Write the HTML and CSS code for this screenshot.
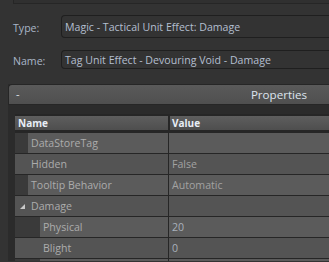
FILE: index.html
```html
<!DOCTYPE html>
<html>
<head>
<meta charset="utf-8">
<link rel="stylesheet" href="styles.css">
</head>
<body>
<div class="topbox"></div>
<div class="form">
  <div class="frow type">
    <div class="flabel">Type:</div>
    <div class="fbox">Magic - Tactical Unit Effect: Damage</div>
  </div>
  <div class="frow name">
    <div class="flabel">Name:</div>
    <div class="fbox">Tag Unit Effect - Devouring Void - Damage</div>
  </div>
</div>
<div class="panel">
  <div class="phead">
    <span class="dash">-</span>
    <span class="ptitle">Properties</span>
  </div>
  <div class="pbody">
    <div class="grid">
      <div class="ghead">
        <div class="gcname">Name</div>
        <div class="gcval">Value</div>
      </div>
      <div class="grow light">
        <div class="ncell"><span class="ind l1"></span><span class="ntext">DataStoreTag</span></div>
        <div class="vcell"></div>
      </div>
      <div class="grow dark">
        <div class="ncell"><span class="ind l1"></span><span class="ntext">Hidden</span></div>
        <div class="vcell">False</div>
      </div>
      <div class="grow light">
        <div class="ncell"><span class="ind l1"></span><span class="ntext">Tooltip Behavior</span></div>
        <div class="vcell">Automatic</div>
      </div>
      <div class="grow dark">
        <div class="ncell"><span class="ind l1 exp"><svg width="5" height="5" viewBox="0 0 5 5"><polygon points="5,0 5,5 0,5" fill="#c8c8c8"/></svg></span><span class="ntext">Damage</span></div>
        <div class="vcell"></div>
      </div>
      <div class="grow light">
        <div class="ncell"><span class="ind l2"></span><span class="ntext">Physical</span></div>
        <div class="vcell num">20</div>
      </div>
      <div class="grow dark">
        <div class="ncell"><span class="ind l2"></span><span class="ntext">Blight</span></div>
        <div class="vcell num">0</div>
      </div>
      <div class="grow light short">
        <div class="ncell"><span class="ind l2"></span><span class="ntext"></span></div>
        <div class="vcell"></div>
      </div>
    </div>
  </div>
</div>
</body>
</html>
```
FILE: styles.css
```css
html, body {
  margin: 0;
  padding: 0;
  background: #333333;
  width: 329px;
  height: 262px;
  overflow: hidden;
  font-family: "Open Sans", "Noto Sans", sans-serif;
  font-size: 10.6px;
}
.topbox {
  height: 3px;
  margin-left: 13px;
  border-left: 1px solid #262626;
  border-bottom: 1px solid #262626;
  background: #303030;
}
.form {
  display: flex;
  flex-direction: column;
  padding-left: 13px;
  padding-top: 11px;
  gap: 12px;
}
.frow {
  display: flex;
  align-items: stretch;
}
.flabel {
  width: 48px;
  color: #a9b6c8;
  display: flex;
  align-items: center;
  padding-top: 2px;
}
.fbox {
  flex: 1;
  border: 1px solid #1f1f1f;
  border-right: none;
  border-radius: 4px 0 0 4px;
  background: #333333;
  color: #b3bfd0;
  display: flex;
  align-items: center;
  padding-left: 3px;
  padding-top: 1px;
  white-space: nowrap;
  overflow: hidden;
}
.type .fbox { height: 20px; }
.name .fbox { height: 16px; }
.panel {
  margin-top: 15px;
  margin-left: 8px;
  background: #2b2b2b;
  height: 177px;
  overflow: hidden;
}
.phead {
  height: 21px;
  border-radius: 4px 0 0 0;
  border: 1px solid #262626;
  border-right: none;
  box-sizing: border-box;
  background: linear-gradient(#5a5a5a, #4f4f4f);
  display: flex;
  align-items: center;
}
.dash {
  color: #dfe4ea;
  margin-left: 7px;
  font-size: 11px;
  line-height: 1;
  margin-top: -2px;
}
.ptitle {
  color: #dde4ee;
  margin-left: auto;
  margin-right: 22px;
  font-size: 11.6px;
}
.pbody {
  padding-top: 9px;
  padding-left: 7px;
}
.grid {
  border-top: 2px solid #262626;
  background: #262626;
  display: flex;
  flex-direction: column;
  gap: 1px;
}
.ghead {
  display: flex;
  height: 14px;
  background: linear-gradient(#5e5e5e, #4e4e4e);
  border-bottom: 1px solid #262626;
  margin-bottom: 1px;
  color: #e8eef6;
  font-size: 10px;
  font-weight: bold;
  line-height: 14px;
}
.gcname {
  width: 150px;
  padding-left: 3px;
  border-right: 2px solid #262626;
}
.gcval {
  padding-left: 2px;
}
.grow {
  display: flex;
  height: 20px;
  flex-shrink: 0;
}
.grow.light { background: #5b5b5b; }
.grow.dark { background: #545454; }
.ncell {
  width: 153px;
  display: flex;
  align-items: center;
  border-right: 1px solid #262626;
  color: #acacac;
}
.ind {
  align-self: stretch;
  display: flex;
  align-items: center;
  justify-content: center;
}
.ind.l1 { width: 13px; }
.ind.l2 { width: 25px; }
.light .ind { background: #3a3a3a; }
.ind.exp { justify-content: flex-start; padding-left: 5px; width: 8px; }
.ntext {
  padding-left: 3px;
  white-space: nowrap;
}
.vcell {
  flex: 1;
  display: flex;
  align-items: center;
  padding-left: 3px;
  color: #a2a2a2;
}
.vcell.num { color: #a9b1bb; }
```
